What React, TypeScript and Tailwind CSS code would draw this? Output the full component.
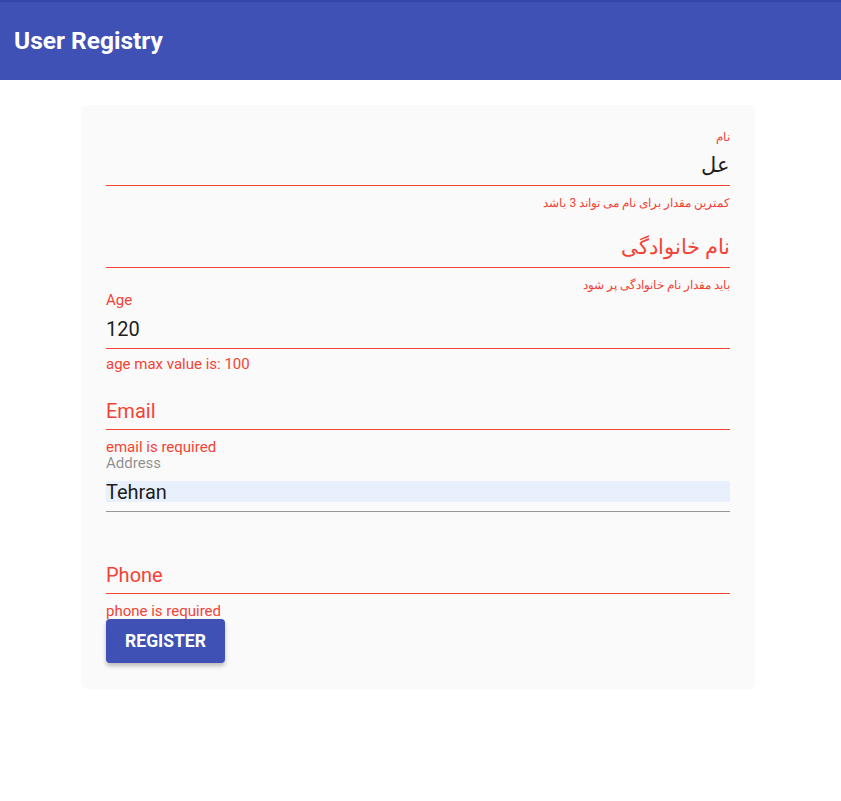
import React from "react";

const red = "text-[#f44336]";

function RtlField({ label, value, placeholder, error }: { label?: string; value?: string; placeholder?: string; error: string }) {
  return (
    <div dir="rtl">
      <div className={`h-[14px] text-[12px] leading-[14px] ${red}`}>{label}</div>
      <div className="h-[42px] border-b border-[#f44336] pt-[6px]">
        {value ? (
          <div className="text-[21px] leading-[30px] text-black/90">{value}</div>
        ) : (
          <div className={`text-[21px] leading-[30px] ${red}`}>{placeholder}</div>
        )}
      </div>
      <div className={`mt-[10px] h-[16px] text-[12px] leading-[14px] ${red}`}>{error}</div>
    </div>
  );
}

function Field({
  label,
  value,
  placeholder,
  error,
  autofill,
  ok,
  tight,
}: {
  label?: string;
  value?: string;
  placeholder?: string;
  error?: string;
  autofill?: boolean;
  ok?: boolean;
  tight?: boolean;
}) {
  return (
    <div>
      <div className={`h-[16px] text-[15px] leading-[16px] ${ok ? "text-black/45" : red}`}>{label}</div>
      <div className={`h-[41px] border-b pt-[10px] ${ok ? "border-black/40" : "border-[#f44336]"}`}>
        {value ? (
          <div className={`h-[21px] text-[20px] leading-[23px] text-black/90 ${autofill ? "bg-[#e8f0fe]" : ""}`}>{value}</div>
        ) : (
          <div className={`h-[21px] text-[20px] leading-[24px] ${red}`}>{placeholder}</div>
        )}
      </div>
      <div className={`text-[15px] leading-[16px] ${tight ? "h-[24px] pt-[7px]" : "h-[25px] pt-[9px]"} ${red}`}>{error}</div>
    </div>
  );
}

export default function App() {
  return (
    <div className="min-h-screen bg-white font-['Roboto',sans-serif]">
      <header className="flex h-20 items-center border-t-2 border-[#3646a8] bg-[#3f51b5] px-[14px]">
        <h1 className="text-[24.5px] font-bold text-white">User Registry</h1>
      </header>
      <div className="ml-[81px] mt-[25px] w-[674px] rounded-md bg-[#fafafa] px-[25px] pb-[26px] pt-[25px]">
        <RtlField label="نام" value="عل" error="کمترین مقدار برای نام می تواند 3 باشد" />
        <RtlField placeholder="نام خانوادگی" error="باید مقدار نام خانوادگی پر شود" />
        <div className="-mt-[2px]">
          <Field label="Age" value="120" error="age max value is: 100" tight />
        </div>
        <Field placeholder="Email" error="email is required" />
        <Field label="Address" value="Tehran" autofill ok />
        <Field placeholder="Phone" error="phone is required" />
        <button className="h-[44px] w-[119px] rounded bg-[#3f51b5] text-[17.5px] font-bold text-white shadow-[0_3px_4px_rgba(0,0,0,0.25)]">
          REGISTER
        </button>
      </div>
    </div>
  );
}
